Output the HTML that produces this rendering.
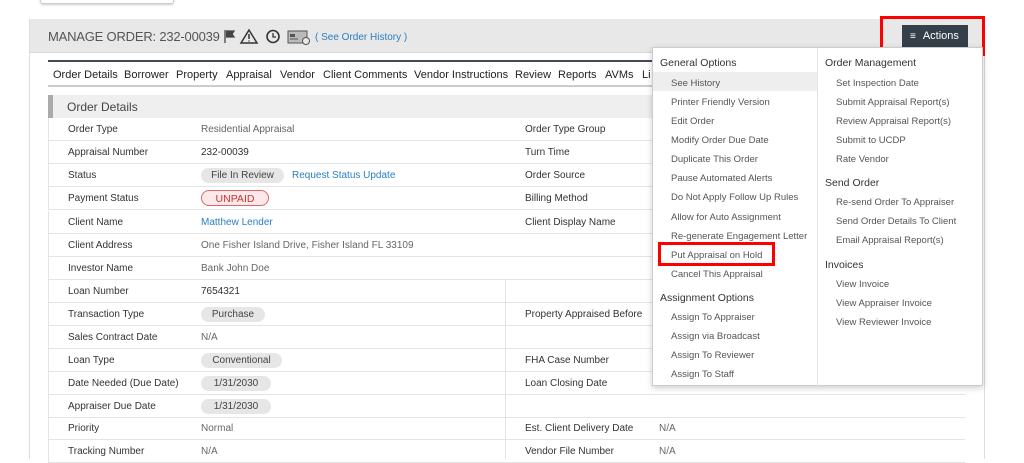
<!DOCTYPE html>
<html><head><meta charset="utf-8"><style>
*{margin:0;padding:0;box-sizing:border-box}
body{width:1024px;height:453px;overflow:hidden;background:#fff;font-family:"Liberation Sans",sans-serif;font-size:10px;color:#444;position:relative}
.abs{position:absolute}
.topbox{left:40px;top:-6px;width:134px;height:10px;border:1px solid #ccc;border-radius:3px;box-shadow:0 1px 2px #ccc}
.panel{left:29px;top:19px;width:956px;height:440px;border:1px solid #ddd;border-bottom:none}
.hdr{left:30px;top:19px;width:954px;height:34px;background:#e8e8e8;border-bottom:1px solid #d8d8d8}
.title{left:48px;top:29px;font-size:13px;color:#555;letter-spacing:-0.2px;white-space:nowrap}
.hist{left:315px;top:32px;font-size:10px;color:#2a7fc1}
.tabs{left:48px;top:60px;width:917px;height:27px;border-top:2px solid #444b55;border-bottom:2px solid #ccc}
.tabs span{position:absolute;top:7px;font-size:11px;color:#222}
.sec{left:48px;top:95px;width:917px;height:23px;background:#efefef;border-left:5px solid #aaa;font-size:12px;color:#444;padding:5px 0 0 14px}
.row{position:absolute;left:48px;width:917px;height:23px;border-bottom:1px solid #e4e4e4;border-left:1px solid #e4e4e4}
.row .l{position:absolute;left:19px;top:6px;color:#333}
.row .v{position:absolute;left:152px;top:6px;color:#666}
.row .l2{position:absolute;left:476px;top:6px;color:#333}
.row .v2{position:absolute;left:610px;top:6px;color:#666}
.pill{position:absolute;left:152px;top:4px;height:15px;background:#e6e6e6;border-radius:8px;padding:2px 0;text-align:center;color:#444}
.row .blue{color:#2a7fc1}
.menu{left:652px;top:47px;width:331px;height:339px;background:#fff;border:1px solid #ccc;box-shadow:0 2px 6px rgba(0,0,0,.2)}
.menu .div{position:absolute;left:164px;top:0;width:1px;height:339px;background:#e4e4e4}
.mh{position:absolute;font-size:10.5px;color:#333}
.mi{position:absolute;font-size:9.5px;color:#555}
.act{left:902px;top:25px;width:66px;height:23px;background:#353f49;color:#fff;font-size:11px;padding:5px 0 0 8px}
.red{border:3px solid #f00}
</style></head><body>
<div class="abs topbox"></div>
<div class="abs panel"></div>
<div class="abs hdr"></div>
<div class="abs title">MANAGE ORDER: 232-00039</div>
<svg class="abs" style="left:223px;top:28px" width="90" height="18" viewBox="0 0 90 18">
<path d="M2 2v13M3 3h8l-2 3 2 3H3" fill="#444" stroke="#444" stroke-width="1.3"/>
<path d="M26 2L18 15h16z" fill="none" stroke="#333" stroke-width="1.5"/><path d="M26 6v5M26 12.5v1" stroke="#333" stroke-width="1.5"/>
<circle cx="50" cy="8.5" r="6" fill="none" stroke="#333" stroke-width="1.6"/><path d="M50 5v4h3" fill="none" stroke="#333" stroke-width="1.3"/>
<rect x="65" y="3" width="19" height="12" fill="#bbb" stroke="#555"/><rect x="67" y="6" width="5" height="3" fill="#555"/><path d="M67 11h8" stroke="#555"/><circle cx="83" cy="13" r="3.5" fill="#e8e8e8" stroke="#555"/>
</svg>
<div class="abs hist">( See Order History )</div>
<div class="abs tabs">
<span style="left:5px">Order Details</span><span style="left:76px">Borrower</span><span style="left:128px">Property</span><span style="left:178px">Appraisal</span><span style="left:232px">Vendor</span><span style="left:275px">Client Comments</span><span style="left:366px">Vendor Instructions</span><span style="left:467px">Review</span><span style="left:510px">Reports</span><span style="left:557px">AVMs</span><span style="left:594px">Li</span>
</div>
<div class="abs sec">Order Details</div>

<div class="row" style="top:118px"><span class="l">Order Type</span><span class="v">Residential Appraisal</span><span class="l2">Order Type Group</span></div>
<div class="row" style="top:141px"><span class="l">Appraisal Number</span><span class="v" style="color:#333">232-00039</span><span class="l2">Turn Time</span></div>
<div class="row" style="top:164px"><span class="l">Status</span><span class="pill" style="width:83px">File In Review</span><span class="v" style="left:243px;color:#2a7fc1">Request Status Update</span><span class="l2">Order Source</span></div>
<div class="row" style="top:187px"><span class="l">Payment Status</span><span class="pill" style="width:68px;background:#fde9e9;border:1px solid #d66;color:#c33;top:3px;height:16px;font-size:10.5px">UNPAID</span><span class="l2">Billing Method</span></div>
<div class="row" style="top:211px"><span class="l">Client Name</span><span class="v" style="color:#2a7fc1">Matthew Lender</span><span class="l2">Client Display Name</span></div>
<div class="row" style="top:234px"><span class="l">Client Address</span><span class="v">One Fisher Island Drive, Fisher Island FL 33109</span></div>
<div class="row" style="top:257px"><span class="l">Investor Name</span><span class="v">Bank John Doe</span></div>
<div class="row" style="top:280px"><span class="l">Loan Number</span><span class="v" style="color:#333">7654321</span></div>
<div class="row" style="top:303px"><span class="l">Transaction Type</span><span class="pill" style="width:64px">Purchase</span><span class="l2">Property Appraised Before</span></div>
<div class="row" style="top:326px"><span class="l">Sales Contract Date</span><span class="v">N/A</span></div>
<div class="row" style="top:349px"><span class="l">Loan Type</span><span class="pill" style="width:81px">Conventional</span><span class="l2">FHA Case Number</span></div>
<div class="row" style="top:372px"><span class="l">Date Needed (Due Date)</span><span class="pill" style="width:70px">1/31/2030</span><span class="l2">Loan Closing Date</span></div>
<div class="row" style="top:395px"><span class="l">Appraiser Due Date</span><span class="pill" style="width:70px">1/31/2030</span></div>
<div class="row" style="top:417px"><span class="l">Priority</span><span class="v">Normal</span><span class="l2">Est. Client Delivery Date</span><span class="v2">N/A</span></div>
<div class="row" style="top:440px"><span class="l">Tracking Number</span><span class="v">N/A</span><span class="l2">Vendor File Number</span><span class="v2">N/A</span></div>
<div class="abs" style="left:505px;top:279px;width:1px;height:180px;background:#e4e4e4"></div>

<div class="abs act"><span style="font-size:10px;margin-right:7px">&#8801;</span>Actions</div>
<div class="abs red" style="left:880px;top:16px;width:105px;height:40px"></div>

<div class="abs menu">
<div class="div"></div>
<div class="abs" style="left:0;top:24px;width:164px;height:19px;background:#eee"></div>
<span class="mh" style="left:7px;top:9px">General Options</span>
<span class="mi" style="left:18px;top:30px">See History</span>
<span class="mi" style="left:18px;top:49px">Printer Friendly Version</span>
<span class="mi" style="left:18px;top:68px">Edit Order</span>
<span class="mi" style="left:18px;top:87px">Modify Order Due Date</span>
<span class="mi" style="left:18px;top:106px">Duplicate This Order</span>
<span class="mi" style="left:18px;top:125px">Pause Automated Alerts</span>
<span class="mi" style="left:18px;top:144px">Do Not Apply Follow Up Rules</span>
<span class="mi" style="left:18px;top:164px">Allow for Auto Assignment</span>
<span class="mi" style="left:18px;top:183px">Re-generate Engagement Letter</span>
<span class="mi" style="left:18px;top:202px">Put Appraisal on Hold</span>
<span class="mi" style="left:18px;top:221px">Cancel This Appraisal</span>
<span class="mh" style="left:7px;top:244px">Assignment Options</span>
<span class="mi" style="left:18px;top:264px">Assign To Appraiser</span>
<span class="mi" style="left:18px;top:283px">Assign via Broadcast</span>
<span class="mi" style="left:18px;top:302px">Assign To Reviewer</span>
<span class="mi" style="left:18px;top:321px">Assign To Staff</span>
<span class="mh" style="left:172px;top:9px">Order Management</span>
<span class="mi" style="left:183px;top:30px">Set Inspection Date</span>
<span class="mi" style="left:183px;top:49px">Submit Appraisal Report(s)</span>
<span class="mi" style="left:183px;top:68px">Review Appraisal Report(s)</span>
<span class="mi" style="left:183px;top:87px">Submit to UCDP</span>
<span class="mi" style="left:183px;top:106px">Rate Vendor</span>
<span class="mh" style="left:172px;top:129px">Send Order</span>
<span class="mi" style="left:183px;top:149px">Re-send Order To Appraiser</span>
<span class="mi" style="left:183px;top:168px">Send Order Details To Client</span>
<span class="mi" style="left:183px;top:187px">Email Appraisal Report(s)</span>
<span class="mh" style="left:172px;top:211px">Invoices</span>
<span class="mi" style="left:183px;top:231px">View Invoice</span>
<span class="mi" style="left:183px;top:250px">View Appraiser Invoice</span>
<span class="mi" style="left:183px;top:269px">View Reviewer Invoice</span>
</div>
<div class="abs red" style="left:658px;top:242px;width:117px;height:24px"></div>
</body></html>
